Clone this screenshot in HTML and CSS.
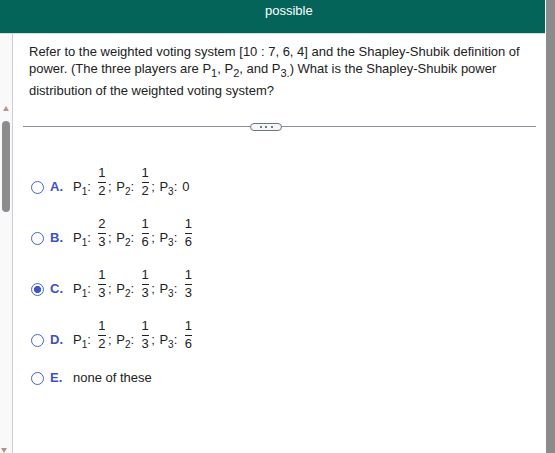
FILE: index.html
```html
<!DOCTYPE html>
<html>
<head>
<meta charset="utf-8">
<link rel="stylesheet" href="styles.css">
</head>
<body>
<div class="page">
  <div class="main">
    <header class="top"><span>possible</span></header>
    <div class="body">
      <div class="track">
        <div class="arrow up"></div>
        <div class="thumb"></div>
        <div class="fill"></div>
        <div class="arrow down"></div>
      </div>
      <div class="content">
        <p class="question">Refer to the weighted voting system [10 : 7, 6, 4] and the Shapley-Shubik definition of power. (The three players are P<span class="qsub">1</span>, P<span class="qsub">2</span>, and P<span class="qsub">3</span><span class="qsub">.</span>) What is the Shapley-Shubik power distribution of the weighted voting system?</p>
        <div class="divider"><span class="line lead"></span><span class="pill"><i></i><i></i><i></i></span><span class="line rest"></span></div>
        <div class="options">
          <div class="opt"><span class="radio"></span><span class="letter">A.</span><span class="math">P<span class="sub">1</span><span class="colon">:</span><span class="frac"><span class="num">1</span><span class="den">2</span></span><span class="semi">;</span>P<span class="sub">2</span><span class="colon">:</span><span class="frac"><span class="num">1</span><span class="den">2</span></span><span class="semi">;</span>P<span class="sub">3</span><span class="colon">:</span>0</span></div>
          <div class="opt"><span class="radio"></span><span class="letter">B.</span><span class="math">P<span class="sub">1</span><span class="colon">:</span><span class="frac"><span class="num">2</span><span class="den">3</span></span><span class="semi">;</span>P<span class="sub">2</span><span class="colon">:</span><span class="frac"><span class="num">1</span><span class="den">6</span></span><span class="semi">;</span>P<span class="sub">3</span><span class="colon">:</span><span class="frac"><span class="num">1</span><span class="den">6</span></span></span></div>
          <div class="opt"><span class="radio on"></span><span class="letter">C.</span><span class="math">P<span class="sub">1</span><span class="colon">:</span><span class="frac"><span class="num">1</span><span class="den">3</span></span><span class="semi">;</span>P<span class="sub">2</span><span class="colon">:</span><span class="frac"><span class="num">1</span><span class="den">3</span></span><span class="semi">;</span>P<span class="sub">3</span><span class="colon">:</span><span class="frac"><span class="num">1</span><span class="den">3</span></span></span></div>
          <div class="opt"><span class="radio"></span><span class="letter">D.</span><span class="math">P<span class="sub">1</span><span class="colon">:</span><span class="frac"><span class="num">1</span><span class="den">2</span></span><span class="semi">;</span>P<span class="sub">2</span><span class="colon">:</span><span class="frac"><span class="num">1</span><span class="den">3</span></span><span class="semi">;</span>P<span class="sub">3</span><span class="colon">:</span><span class="frac"><span class="num">1</span><span class="den">6</span></span></span></div>
          <div class="opt last"><span class="radio"></span><span class="letter">E.</span><span class="plain">none of these</span></div>
        </div>
      </div>
    </div>
  </div>
  <div class="rightbar"></div>
</div>
</body>
</html>
```
FILE: styles.css
```css
html, body {
  margin: 0;
  padding: 0;
  background: #fff;
}
body {
  font-family: "Liberation Sans", Arial, sans-serif;
  font-size: 13px;
  color: #222;
}
.page {
  display: flex;
  height: 453px;
  overflow: hidden;
}
.main {
  width: 545px;
  display: flex;
  flex-direction: column;
}
.rightbar {
  width: 9px;
  margin-left: 1px;
  background: #8b8b8b;
}
.top {
  height: 34px;
  box-sizing: border-box;
  background: #05645a;
  border-bottom: 1px solid #cfe0df;
  color: #fff;
  padding: 2px 0 0 265px;
  line-height: 17px;
}
.body {
  flex: 1;
  display: flex;
}
.track {
  width: 12px;
  background: #f9f9f9;
  border-right: 1px solid #c9cde0;
  display: flex;
  flex-direction: column;
  align-items: center;
}
.arrow {
  width: 0;
  height: 0;
  border-left: 3.5px solid transparent;
  border-right: 3.5px solid transparent;
}
.arrow.up {
  border-bottom: 5px solid #b2988b;
  margin-top: 72px;
}
.arrow.down {
  border-top: 5px solid #ad9587;
  align-self: flex-start;
  margin-left: 1px;
}
.thumb {
  width: 8px;
  height: 91px;
  border-radius: 4px;
  background: #8c8c8c;
  margin-top: 10px;
}
.fill {
  flex: 1;
}
.content {
  flex: 1;
  padding: 0 9px 0 10px;
}
.question {
  margin: 9px 0 0 6px;
  line-height: 17px;
}
.qsub {
  font-size: 11px;
  vertical-align: -4px;
}
.divider {
  margin-top: 23px;
  display: flex;
  align-items: center;
  height: 9px;
}
.line {
  height: 1px;
  background: #8a9098;
}
.line.lead {
  width: 227px;
  flex: none;
}
.line.rest {
  flex: 1;
}
.pill {
  width: 32px;
  height: 8px;
  box-sizing: border-box;
  border: 1.5px solid #6f7580;
  border-radius: 5px;
  background: #f5f6f8;
  display: flex;
  justify-content: center;
  align-items: center;
  gap: 3.5px;
}
.pill i {
  width: 2px;
  height: 2px;
  background: #4a4f57;
  border-radius: 50%;
}
.options {
  margin-top: 35px;
  padding-left: 8px;
  display: flex;
  flex-direction: column;
  gap: 20.5px;
  line-height: 17px;
}
.opt.last {
  margin-top: -1px;
}
.radio {
  display: inline-block;
  width: 13px;
  height: 13px;
  box-sizing: border-box;
  border: 1.5px solid #4661d5;
  border-radius: 50%;
  vertical-align: -2.5px;
  margin-right: 6px;
}
.radio.on {
  background: radial-gradient(circle, #3c55cf 0 3.3px, transparent 3.9px);
}
.letter {
  display: inline-block;
  width: 23px;
  font-weight: bold;
  color: #3d50c6;
}
.sub {
  font-size: 10px;
  vertical-align: -4px;
  line-height: 0;
}
.colon {
  margin-right: 5px;
}
.frac {
  display: inline-flex;
  flex-direction: column;
  align-items: center;
  vertical-align: 14px;
  margin: 0 2.5px;
}
.num {
  line-height: 13px;
  padding-bottom: 2.5px;
}
.den {
  line-height: 13px;
  padding-top: 1px;
  border-top: 1px solid #222;
}
.semi {
  margin-right: 4.5px;
}
```
